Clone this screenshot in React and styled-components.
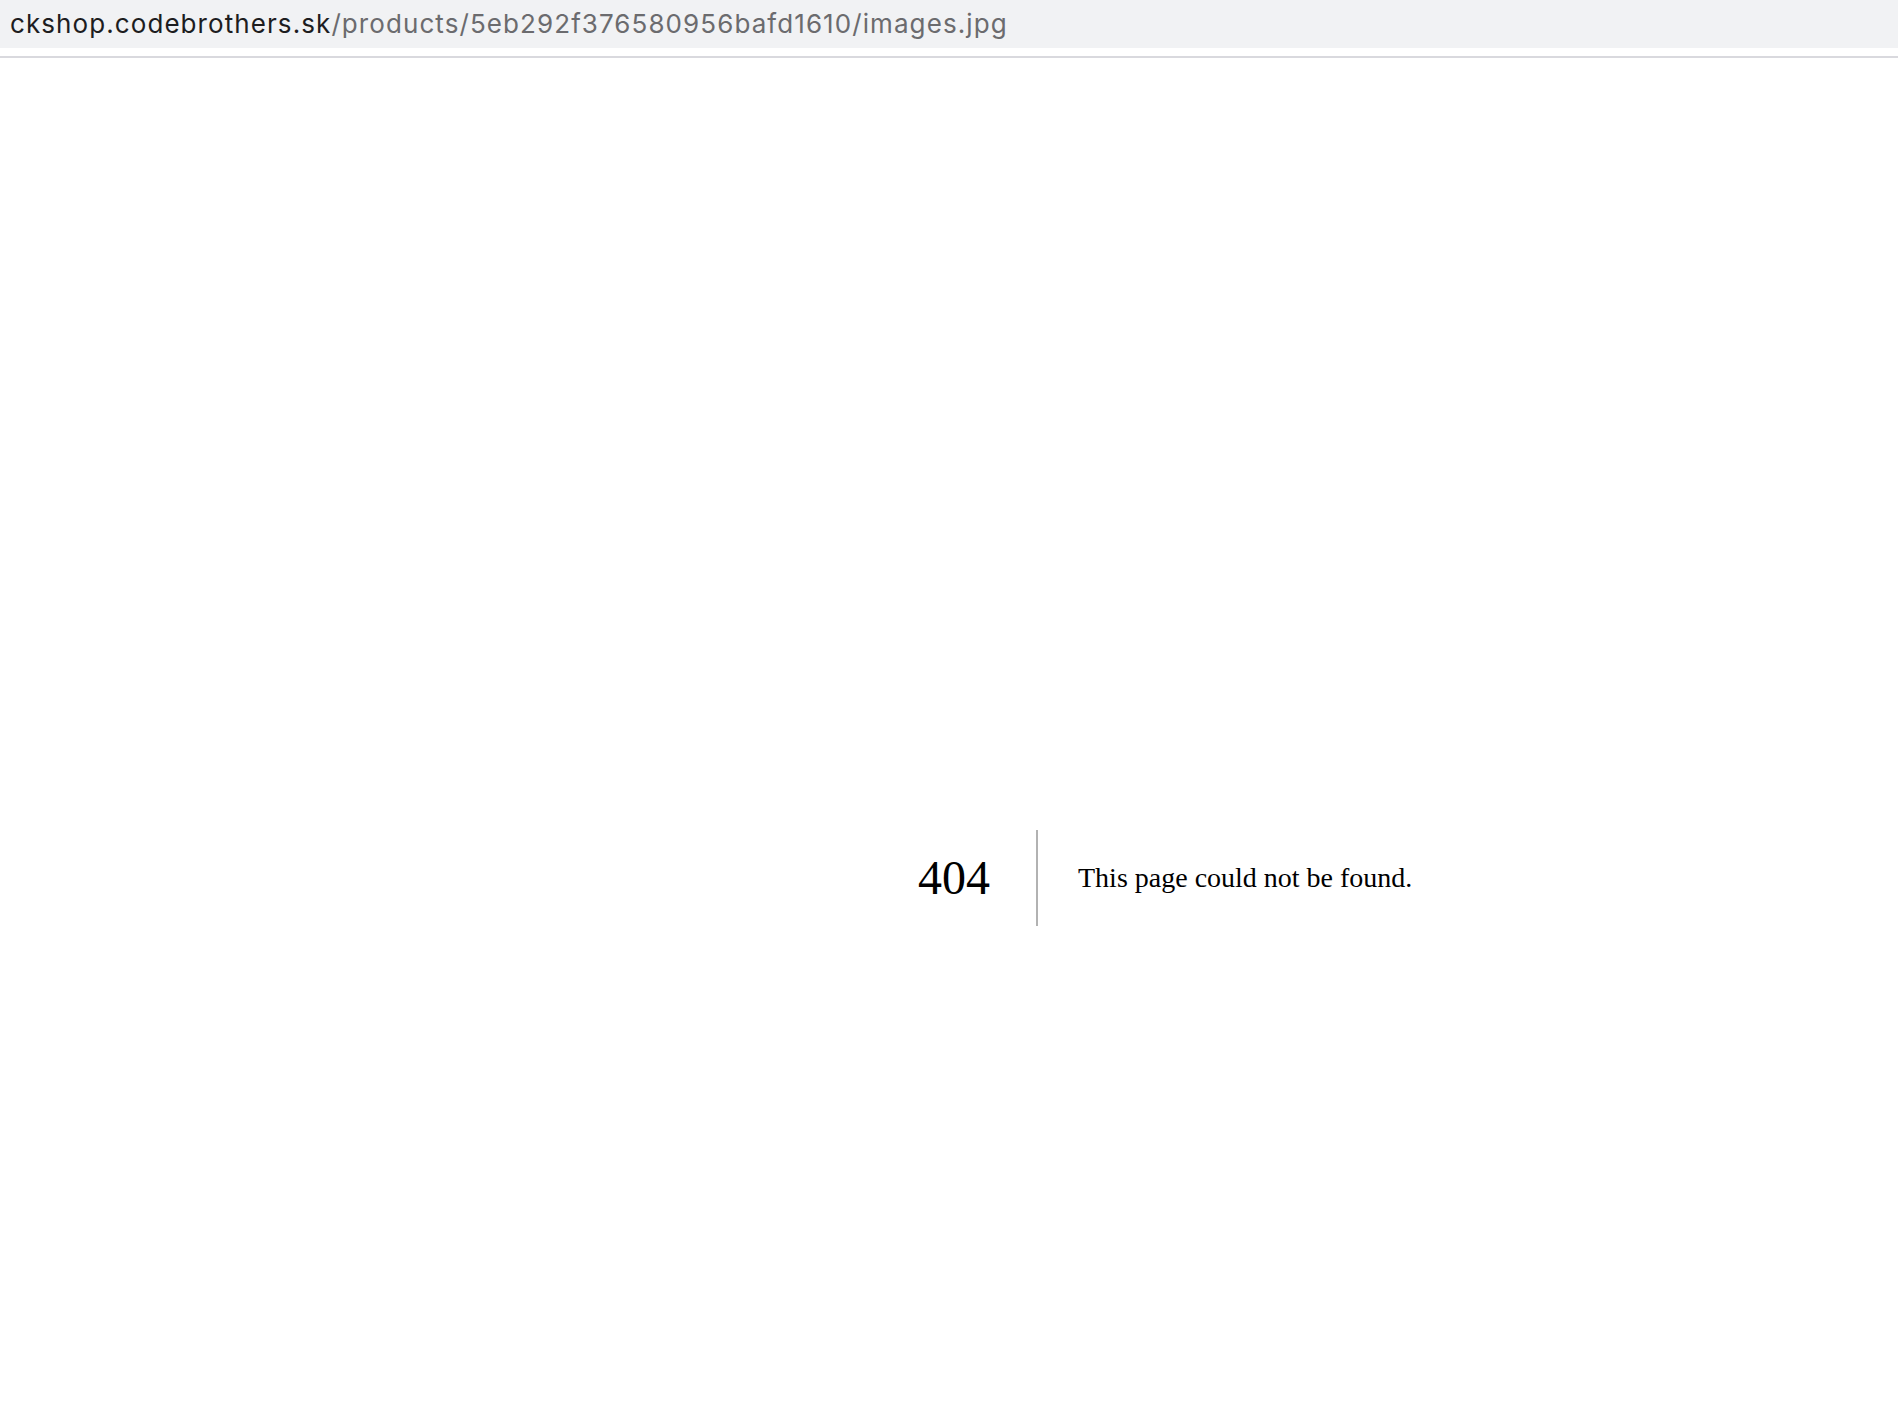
import styled, { createGlobalStyle } from "styled-components";

const GlobalStyle = createGlobalStyle`
  html, body {
    margin: 0;
    padding: 0;
    background: #fff;
  }
`;

const App = () => {
  return (
    <>
      <GlobalStyle />
      <AddressBar>
        <Url>
          <Host>ckshop.codebrothers.sk</Host>
          <Path>/products/5eb292f376580956bafd1610/images.jpg</Path>
        </Url>
      </AddressBar>
      <Rule />
      <Main>
        <ErrorBox>
          <Code>404</Code>
          <Message>
            <h2>This page could not be found.</h2>
          </Message>
        </ErrorBox>
      </Main>
    </>
  );
};

export default App;

const AddressBar = styled.div`
  height: 48px;
  background-color: #f1f2f4;
  display: flex;
  align-items: center;
  padding-left: 10px;
`;

const Url = styled.div`
  font-family: Inter, "Liberation Sans", Arial, sans-serif;
  font-size: 26px;
  letter-spacing: 1.08px;
  white-space: nowrap;
  margin-top: -2px;
`;

const Host = styled.span`
  color: #1d1d1f;
`;

const Path = styled.span`
  color: #6b6b6e;
`;

const Rule = styled.div`
  margin-top: 8px;
  height: 2px;
  background-color: #d9d9de;
`;

const Main = styled.main`
  padding: 772px 0 0 918px;
  height: 1368px;
  box-sizing: border-box;
  font-family: "Liberation Serif", "Times New Roman", serif;
  color: #000;
`;

const ErrorBox = styled.div`
  display: flex;
  align-items: flex-start;
`;

const Code = styled.h1`
  margin: 0 40px 0 0;
  padding: 20px 46px 20px 0;
  font-size: 48px;
  font-weight: 500;
  line-height: 56px;
  border-right: 2px solid rgba(0, 0, 0, 0.3);
`;

const Message = styled.div`
  line-height: 96px;
  height: 96px;

  & h2 {
    margin: 0;
    padding: 0;
    font-size: 28px;
    font-weight: normal;
    line-height: inherit;
  }
`;
